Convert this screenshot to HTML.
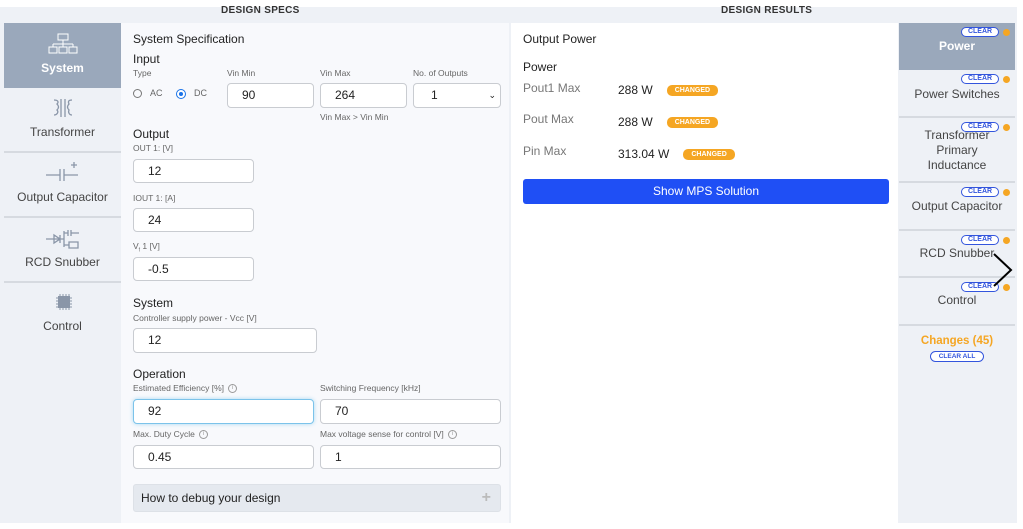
<!DOCTYPE html>
<html><head><meta charset="utf-8"><style>
*{margin:0;padding:0;box-sizing:border-box}
body{width:1023px;height:529px;overflow:hidden;background:#fff;font-family:"Liberation Sans",sans-serif;color:#222;position:relative}
.a{position:absolute}
.bg{left:0;top:7px;width:1017px;height:516px;background:#eef1f6}
.hd{font-size:10px;font-weight:bold;color:#333;top:5px;letter-spacing:.3px}
.nav{left:4px;width:117px;background:#eef1f6;border-bottom:2px solid #d6dae0;text-align:center;color:#444;font-size:12px}
.nav .t{position:absolute;left:0;right:0}
.form{left:121px;top:23px;width:388px;height:500px;background:#f8f9fc}
.res{left:511px;top:23px;width:387px;height:500px;background:#fff}
.rn{left:899px;width:116px;background:#eef1f6;border-bottom:2px solid #d6dae0;text-align:center;color:#444;font-size:12px}
.clr{position:absolute;left:62px;top:4px;width:38px;height:10px;border:1px solid #3355dd;border-radius:6px;background:#fff;font-size:7px;font-weight:bold;color:#3355dd;line-height:8px;text-align:center}
.dot{position:absolute;left:104px;top:6px;width:7px;height:7px;border-radius:50%;background:#f5a623}
.in{position:absolute;background:#fff;border:1px solid #c9ccd1;border-radius:4px;font-size:12px;padding-left:14px;line-height:22px;color:#222}
.lb{position:absolute;font-size:8.5px;color:#666}
.h{position:absolute;font-size:12px;color:#222}
.ch{display:inline-block;background:#f5a623;color:#fff;font-size:7px;font-weight:bold;border-radius:5px;padding:1px 8px;vertical-align:middle;margin-left:14px;line-height:9px}
.i{display:inline-block;width:9px;height:9px;border:1px solid #999;border-radius:50%;vertical-align:middle;margin-left:4px;font-size:6px;line-height:7px;text-align:center;color:#999}
</style></head><body>
<div class="a bg"></div>
<div class="a hd" style="left:221px">DESIGN SPECS</div>
<div class="a hd" style="left:721px">DESIGN RESULTS</div>

<div class="a nav" style="top:23px;height:65px;background:#9aa8bb;color:#fff;border:none">
<svg class="a" style="left:44px;top:10px" width="30" height="22" viewBox="0 0 30 22" fill="none" stroke="#fff" stroke-width="1"><rect x="10" y="1" width="10" height="6"/><path d="M15 7v4M5 11h20M5 11v3M15 11v3M25 11v3"/><rect x="1" y="14" width="8" height="6"/><rect x="11" y="14" width="8" height="6"/><rect x="21" y="14" width="8" height="6"/></svg>
<div class="t" style="top:38px;font-weight:bold;font-size:12px">System</div></div>
<div class="a nav" style="top:88px;height:65px">
<svg class="a" style="left:48px;top:10px" width="22" height="20" viewBox="0 0 22 20" fill="none" stroke="#8a96a8" stroke-width="1.3"><path d="M2 2c4 0 5 2 3 4c2 2 2 4 0 6c2 2 0 5-3 5M9 1v18M13 1v18M20 2c-4 0-4 2-3 4c-2 2-2 4 0 6c-1 2 0 5 3 5"/></svg>
<div class="t" style="top:37px">Transformer</div></div>
<div class="a nav" style="top:153px;height:65px">
<svg class="a" style="left:40px;top:8px" width="38" height="22" viewBox="0 0 38 22" fill="none" stroke="#8a96a8" stroke-width="1.3"><path d="M2 14h14M16 8v12M20 8v12M20 14h14M27 4h6M30 1v6"/></svg>
<div class="t" style="top:37px">Output Capacitor</div></div>
<div class="a nav" style="top:218px;height:65px">
<svg class="a" style="left:40px;top:10px" width="38" height="22" viewBox="0 0 38 22" fill="none" stroke="#8a96a8" stroke-width="1.3"><path d="M2 11h14M10 7v8l6-4zM16 7v8M16 11h4M20 3v16M20 5h4M24 2v6M27 2v6M27 5h8M20 17h5M25 14h9v6h-9z"/></svg>
<div class="t" style="top:37px">RCD Snubber</div></div>
<div class="a nav" style="top:283px;height:65px;border:none">
<svg class="a" style="left:51px;top:10px" width="18" height="18" viewBox="0 0 18 18"><rect x="3" y="3" width="12" height="12" fill="#8a96a8"/><path d="M5 1v2M8 1v2M11 1v2M14 1v2M5 15v2M8 15v2M11 15v2M14 15v2M1 5h2M1 8h2M1 11h2M1 14h2M15 5h2M15 8h2M15 11h2M15 14h2" stroke="#8a96a8"/></svg>
<div class="t" style="top:36px">Control</div></div>

<div class="a form"></div>
<div class="h" style="left:133px;top:32px">System Specification</div>
<div class="h" style="left:133px;top:52px">Input</div>
<div class="lb" style="left:133px;top:68px">Type</div>
<div class="a" style="left:133px;top:89px;width:9px;height:9px;border:1px solid #777;border-radius:50%"></div>
<div class="lb" style="left:150px;top:88px;font-size:9px">AC</div>
<div class="a" style="left:176px;top:89px;width:10px;height:10px;border:1px solid #1a73e8;border-radius:50%;background:#fff"><div class="a" style="left:2px;top:2px;width:4px;height:4px;border-radius:50%;background:#1a73e8"></div></div>
<div class="lb" style="left:194px;top:88px;font-size:9px">DC</div>
<div class="lb" style="left:227px;top:68px">Vin Min</div>
<div class="in" style="left:227px;top:83px;width:87px;height:25px">90</div>
<div class="lb" style="left:320px;top:68px">Vin Max</div>
<div class="in" style="left:320px;top:83px;width:87px;height:25px">264</div>
<div class="lb" style="left:320px;top:112px">Vin Max &gt; Vin Min</div>
<div class="lb" style="left:413px;top:68px">No. of Outputs</div>
<div class="in" style="left:413px;top:83px;width:88px;height:25px;padding-left:17px">1<span style="position:absolute;right:4px;top:0;font-size:9px">&#8964;</span></div>

<div class="h" style="left:133px;top:127px">Output</div>
<div class="lb" style="left:133px;top:143px">OUT 1: [V]</div>
<div class="in" style="left:133px;top:159px;width:121px;height:24px">12</div>
<div class="lb" style="left:133px;top:193px">IOUT 1: [A]</div>
<div class="in" style="left:133px;top:208px;width:121px;height:24px">24</div>
<div class="lb" style="left:133px;top:241px">V<sub style="font-size:5px">f</sub> 1 [V]</div>
<div class="in" style="left:133px;top:257px;width:121px;height:24px">-0.5</div>

<div class="h" style="left:133px;top:296px">System</div>
<div class="lb" style="left:133px;top:313px">Controller supply power - Vcc [V]</div>
<div class="in" style="left:133px;top:328px;width:184px;height:25px">12</div>

<div class="h" style="left:133px;top:367px">Operation</div>
<div class="lb" style="left:133px;top:383px">Estimated Efficiency [%]<span class="i">i</span></div>
<div class="in" style="left:133px;top:399px;width:181px;height:25px;border-color:#7cc3ea;box-shadow:0 0 4px #a8d8f2">92</div>
<div class="lb" style="left:320px;top:383px">Switching Frequency [kHz]</div>
<div class="in" style="left:320px;top:399px;width:181px;height:25px">70</div>
<div class="lb" style="left:133px;top:429px">Max. Duty Cycle<span class="i">i</span></div>
<div class="in" style="left:133px;top:445px;width:181px;height:24px">0.45</div>
<div class="lb" style="left:320px;top:429px">Max voltage sense for control [V]<span class="i">i</span></div>
<div class="in" style="left:320px;top:445px;width:181px;height:24px">1</div>
<div class="a" style="left:133px;top:484px;width:368px;height:28px;background:#e5e9ef;border:1px solid #dde1e7;border-radius:3px;font-size:12px;line-height:26px;padding-left:7px;color:#222">How to debug your design<span style="position:absolute;right:9px;color:#bbb;font-size:16px;font-weight:bold">+</span></div>

<div class="a res"></div>
<div class="h" style="left:523px;top:32px">Output Power</div>
<div class="h" style="left:523px;top:60px">Power</div>
<div class="h" style="left:523px;top:81px;color:#777">Pout1 Max</div>
<div class="h" style="left:618px;top:83px">288 W<span class="ch">CHANGED</span></div>
<div class="h" style="left:523px;top:112px;color:#777">Pout Max</div>
<div class="h" style="left:618px;top:115px">288 W<span class="ch">CHANGED</span></div>
<div class="h" style="left:523px;top:144px;color:#777">Pin Max</div>
<div class="h" style="left:618px;top:147px">313.04 W<span class="ch">CHANGED</span></div>
<div class="a" style="left:523px;top:179px;width:366px;height:25px;background:#1f4ff5;border-radius:3px;color:#fff;font-size:12px;text-align:center;line-height:24px">Show MPS Solution</div>

<div class="a rn" style="top:23px;height:47px;background:#9aa8bb;color:#fff;border:none"><div class="clr">CLEAR</div><div class="dot"></div><div class="a" style="left:0;right:0;top:16px;font-weight:bold">Power</div></div>
<div class="a rn" style="top:70px;height:48px"><div class="clr">CLEAR</div><div class="dot"></div><div class="a" style="left:0;right:0;top:17px">Power Switches</div></div>
<div class="a rn" style="top:118px;height:65px"><div class="clr">CLEAR</div><div class="dot"></div><div class="a" style="left:0;right:0;top:10px;line-height:15px">Transformer<br>Primary<br>Inductance</div></div>
<div class="a rn" style="top:183px;height:48px"><div class="clr">CLEAR</div><div class="dot"></div><div class="a" style="left:0;right:0;top:16px">Output Capacitor</div></div>
<div class="a rn" style="top:231px;height:47px"><div class="clr">CLEAR</div><div class="dot"></div><div class="a" style="left:0;right:0;top:15px">RCD Snubber</div></div>
<div class="a rn" style="top:278px;height:48px"><div class="clr">CLEAR</div><div class="dot"></div><div class="a" style="left:0;right:0;top:15px">Control</div></div>
<div class="a" style="left:899px;top:335px;width:116px;text-align:center;color:#f5a623;font-weight:bold;font-size:11.5px">Changes (45)</div>
<div class="a" style="left:930px;top:351px;width:54px;height:11px;border:1px solid #3355dd;border-radius:6px;background:#fff;font-size:6.5px;font-weight:bold;color:#3355dd;text-align:center;line-height:9px">CLEAR ALL</div>
<svg class="a" style="left:990px;top:250px" width="24" height="40" viewBox="0 0 24 40" fill="none" stroke="#000" stroke-width="2"><path d="M4 4l17 16L4 36"/></svg>
</body></html>
